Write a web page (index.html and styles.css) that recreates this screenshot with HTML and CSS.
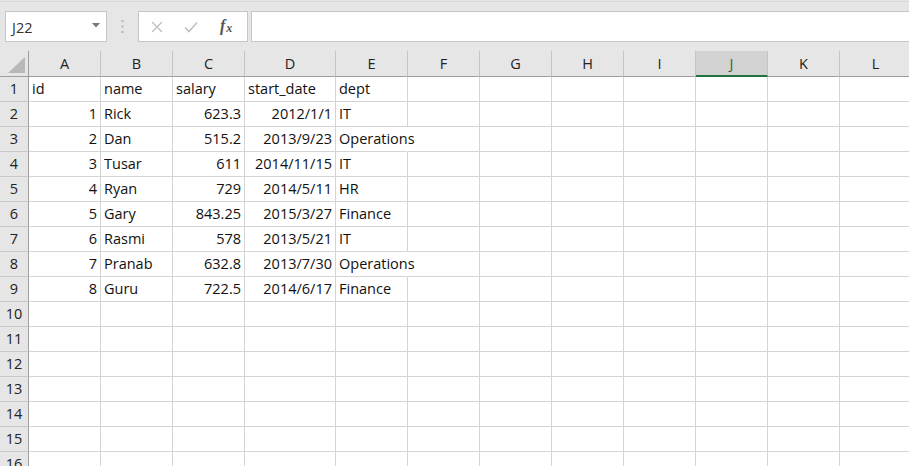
FILE: index.html
```html
<!DOCTYPE html>
<html lang="ja">
<head>
<meta charset="utf-8">
<title>Sheet</title>
<link rel="stylesheet" href="styles.css">
</head>
<body>
<div class="app">
  <div class="formula-bar">
    <div class="namebox">
      <span class="name">J22</span>
      <svg class="dd" width="8" height="5" viewBox="0 0 8 5"><path d="M0 0H8L4 4.5Z" fill="#777"/></svg>
    </div>
    <div class="grip">
      <svg width="3" height="13" viewBox="0 0 3 13"><rect x="0.5" y="0" width="2" height="2" fill="#b5b5b5"/><rect x="0.5" y="5.5" width="2" height="2" fill="#b5b5b5"/><rect x="0.5" y="11" width="2" height="2" fill="#b5b5b5"/></svg>
    </div>
    <div class="fnbox">
      <svg class="ico" width="12" height="12" viewBox="0 0 12 12"><path d="M1 1L11 11M11 1L1 11" stroke="#c0c0c0" stroke-width="1.4" fill="none"/></svg>
      <svg class="ico" width="14" height="12" viewBox="0 0 14 12"><path d="M1 6.5L5 10.5L13 1.5" stroke="#c0c0c0" stroke-width="1.6" fill="none"/></svg>
      <span class="fx">f<sub>x</sub></span>
    </div>
    <div class="formula-input"></div>
  </div>

  <div class="sheet">
    <div class="corner"><svg width="17" height="16" viewBox="0 0 17 16"><path d="M17 0V16H0Z" fill="#b8b8b8"/></svg></div>
    <div class="ch">A</div><div class="ch">B</div><div class="ch">C</div><div class="ch">D</div><div class="ch">E</div><div class="ch">F</div><div class="ch">G</div><div class="ch">H</div><div class="ch">I</div><div class="ch sel">J</div><div class="ch">K</div><div class="ch">L</div>

    <div class="rh">1</div><div class="c">id</div><div class="c">name</div><div class="c">salary</div><div class="c">start_date</div><div class="c">dept</div><div class="c"></div><div class="c"></div><div class="c"></div><div class="c"></div><div class="c"></div><div class="c"></div><div class="c"></div>
    <div class="rh">2</div><div class="c num">1</div><div class="c">Rick</div><div class="c num">623.3</div><div class="c num">2012/1/1</div><div class="c">IT</div><div class="c"></div><div class="c"></div><div class="c"></div><div class="c"></div><div class="c"></div><div class="c"></div><div class="c"></div>
    <div class="rh">3</div><div class="c num">2</div><div class="c">Dan</div><div class="c num">515.2</div><div class="c num">2013/9/23</div><div class="c spill">Operations</div><div class="c"></div><div class="c"></div><div class="c"></div><div class="c"></div><div class="c"></div><div class="c"></div><div class="c"></div>
    <div class="rh">4</div><div class="c num">3</div><div class="c">Tusar</div><div class="c num">611</div><div class="c num">2014/11/15</div><div class="c">IT</div><div class="c"></div><div class="c"></div><div class="c"></div><div class="c"></div><div class="c"></div><div class="c"></div><div class="c"></div>
    <div class="rh">5</div><div class="c num">4</div><div class="c">Ryan</div><div class="c num">729</div><div class="c num">2014/5/11</div><div class="c">HR</div><div class="c"></div><div class="c"></div><div class="c"></div><div class="c"></div><div class="c"></div><div class="c"></div><div class="c"></div>
    <div class="rh">6</div><div class="c num">5</div><div class="c">Gary</div><div class="c num">843.25</div><div class="c num">2015/3/27</div><div class="c">Finance</div><div class="c"></div><div class="c"></div><div class="c"></div><div class="c"></div><div class="c"></div><div class="c"></div><div class="c"></div>
    <div class="rh">7</div><div class="c num">6</div><div class="c">Rasmi</div><div class="c num">578</div><div class="c num">2013/5/21</div><div class="c">IT</div><div class="c"></div><div class="c"></div><div class="c"></div><div class="c"></div><div class="c"></div><div class="c"></div><div class="c"></div>
    <div class="rh">8</div><div class="c num">7</div><div class="c">Pranab</div><div class="c num">632.8</div><div class="c num">2013/7/30</div><div class="c spill">Operations</div><div class="c"></div><div class="c"></div><div class="c"></div><div class="c"></div><div class="c"></div><div class="c"></div><div class="c"></div>
    <div class="rh">9</div><div class="c num">8</div><div class="c">Guru</div><div class="c num">722.5</div><div class="c num">2014/6/17</div><div class="c">Finance</div><div class="c"></div><div class="c"></div><div class="c"></div><div class="c"></div><div class="c"></div><div class="c"></div><div class="c"></div>
    <div class="rh">10</div><div class="c"></div><div class="c"></div><div class="c"></div><div class="c"></div><div class="c"></div><div class="c"></div><div class="c"></div><div class="c"></div><div class="c"></div><div class="c"></div><div class="c"></div><div class="c"></div>
    <div class="rh">11</div><div class="c"></div><div class="c"></div><div class="c"></div><div class="c"></div><div class="c"></div><div class="c"></div><div class="c"></div><div class="c"></div><div class="c"></div><div class="c"></div><div class="c"></div><div class="c"></div>
    <div class="rh">12</div><div class="c"></div><div class="c"></div><div class="c"></div><div class="c"></div><div class="c"></div><div class="c"></div><div class="c"></div><div class="c"></div><div class="c"></div><div class="c"></div><div class="c"></div><div class="c"></div>
    <div class="rh">13</div><div class="c"></div><div class="c"></div><div class="c"></div><div class="c"></div><div class="c"></div><div class="c"></div><div class="c"></div><div class="c"></div><div class="c"></div><div class="c"></div><div class="c"></div><div class="c"></div>
    <div class="rh">14</div><div class="c"></div><div class="c"></div><div class="c"></div><div class="c"></div><div class="c"></div><div class="c"></div><div class="c"></div><div class="c"></div><div class="c"></div><div class="c"></div><div class="c"></div><div class="c"></div>
    <div class="rh">15</div><div class="c"></div><div class="c"></div><div class="c"></div><div class="c"></div><div class="c"></div><div class="c"></div><div class="c"></div><div class="c"></div><div class="c"></div><div class="c"></div><div class="c"></div><div class="c"></div>
    <div class="rh">16</div><div class="c"></div><div class="c"></div><div class="c"></div><div class="c"></div><div class="c"></div><div class="c"></div><div class="c"></div><div class="c"></div><div class="c"></div><div class="c"></div><div class="c"></div><div class="c"></div>
  </div>
</div>
</body>
</html>
```

FILE: styles.css
```css
* { box-sizing: border-box; }
html, body {
  margin: 0;
  padding: 0;
  width: 909px;
  height: 466px;
  overflow: hidden;
  background: #e6e6e6;
  font-family: "Open Sans", "Noto Sans CJK JP", sans-serif;
  color: #111;
}
.app {
  padding-top: 1px;
}
.formula-bar {
  display: flex;
  align-items: stretch;
  border-top: 1px solid #d6d6d6;
  padding: 9px 0 9px 5px;
  height: 50px;
}
.namebox {
  width: 102px;
  height: 31px;
  background: #fff;
  border: 1px solid #c6c6c6;
  display: flex;
  align-items: center;
  justify-content: space-between;
  padding: 0 6px 0 6px;
}
.name {
  font-size: 14.5px;
  color: #333;
  padding-top: 1px;
}
.dd { margin-top: -2px; }
.grip {
  width: 31px;
  display: flex;
  align-items: center;
  justify-content: center;
}
.fnbox {
  width: 110px;
  height: 31px;
  background: #fff;
  border: 1px solid #c6c6c6;
  display: flex;
  align-items: center;
  padding-left: 12px;
  gap: 21px;
}
.fx {
  font-family: "Liberation Serif", "DejaVu Serif", serif;
  font-style: italic;
  font-weight: bold;
  font-size: 16px;
  color: #555;
  margin-left: 1px;
}
.fx sub { font-size: 12px; vertical-align: -1px; margin-left: 1px; }
.formula-input {
  flex: 1;
  height: 31px;
  margin-left: 3px;
  margin-right: -2px;
  background: #fff;
  border: 1px solid #c6c6c6;
}
.sheet {
  display: grid;
  grid-template-columns: 29px 72px 72px 72px 91px repeat(8, 72px);
  grid-template-rows: 26px;
  grid-auto-rows: 25px;
  background: #fff;
  font-size: 14.5px;
}
.corner {
  background: #e6e6e6;
  border-right: 1px solid #9e9e9e;
  border-bottom: 1px solid #9e9e9e;
  display: flex;
  align-items: flex-end;
  justify-content: flex-end;
  padding: 0 3px 3px 0;
}
.ch {
  background: #e6e6e6;
  border-right: 1px solid #c4c4c4;
  border-bottom: 1px solid #9e9e9e;
  text-align: center;
  line-height: 25px;
  color: #222;
}
.ch.sel {
  background: #d2d2d2;
  border-bottom: 2px solid #217346;
  color: #1f6a3e;
}
.rh {
  background: #e6e6e6;
  border-right: 1px solid #9e9e9e;
  border-bottom: 1px solid #c8c8c8;
  text-align: center;
  line-height: 23px;
  color: #222;
}
.c {
  border-right: 1px solid #d4d4d4;
  border-bottom: 1px solid #d4d4d4;
  padding: 0 3px;
  line-height: 23px;
  white-space: nowrap;
  overflow: visible;
}
.c.num { text-align: right; }
.c.spill { border-right-color: transparent; }
```
